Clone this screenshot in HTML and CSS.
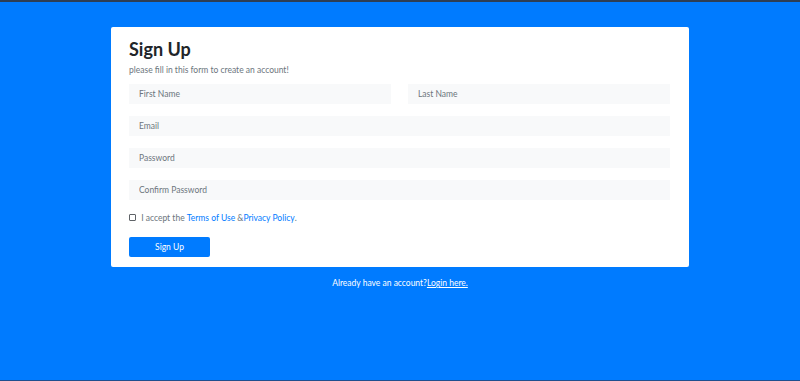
FILE: index.html
```html
<!DOCTYPE html>
<html>
<head>
<meta charset="utf-8">
<link rel="stylesheet" href="styles.css">
</head>
<body>
<div class="page">
  <div class="card">
    <h2 class="title">Sign Up</h2>
    <p class="subtitle">please fill in this form to create an account!</p>
    <div class="row">
      <input class="field" type="text" placeholder="First Name">
      <input class="field" type="text" placeholder="Last Name">
    </div>
    <input class="field" type="text" placeholder="Email">
    <input class="field" type="password" placeholder="Password">
    <input class="field" type="password" placeholder="Confirm Password">
    <label class="accept"><input class="check" type="checkbox"> I accept the <a class="link" href="#">Terms of Use</a> &amp;<a class="link" href="#">Privacy Policy</a>.</label>
    <button class="btn" type="button">Sign Up</button>
  </div>
  <p class="footer">Already have an account?<a class="login" href="#">Login here.</a></p>
</div>
</body>
</html>
```
FILE: styles.css
```css
html, body {
  margin: 0;
  padding: 0;
}
body {
  font-family: Lato, "Noto Sans", sans-serif;
}
.page {
  box-sizing: border-box;
  height: 381px;
  background: #007bff;
  border-top: 2px solid #2d3e55;
  border-bottom: 1px solid #1f4f8f;
  padding-top: 25px;
  display: flex;
  flex-direction: column;
  align-items: center;
}
.card {
  box-sizing: border-box;
  width: 578px;
  height: 240px;
  background: #fff;
  border-radius: 2px;
  padding: 11px 19px 0 18px;
  display: flex;
  flex-direction: column;
}
.title {
  margin: 0;
  font-size: 18px;
  font-weight: 700;
  color: #212529;
  line-height: 22px;
}
.subtitle {
  margin: 4px 0 0;
  font-size: 8.5px;
  color: #6c757d;
  line-height: 12px;
}
.row {
  display: flex;
  gap: 17px;
  margin-top: 8px;
}
.field {
  box-sizing: border-box;
  width: 100%;
  height: 20px;
  border: none;
  background: #f8f9fa;
  padding: 0 10px;
  font-family: inherit;
  font-size: 8.5px;
  color: #495057;
  outline: none;
  margin-top: 12px;
}
.row .field {
  margin-top: 0;
}
.field::placeholder {
  color: #6c757d;
}
.accept {
  display: flex;
  align-items: center;
  font-size: 8.5px;
  color: #6c757d;
  line-height: 12px;
  height: 12px;
  margin-top: 12px;
  white-space: pre;
}
.check {
  appearance: none;
  -webkit-appearance: none;
  box-sizing: border-box;
  width: 7px;
  height: 7px;
  border: 1px solid #5f6368;
  border-radius: 1px;
  background: #fff;
  margin: 0 3px 0 0;
  position: relative;
  top: -1px;
}
.link {
  color: #007bff;
  text-decoration: none;
}
.btn {
  width: 81px;
  height: 20px;
  border: none;
  border-radius: 2px;
  background: #007bff;
  color: #fff;
  font-family: inherit;
  font-size: 8.5px;
  padding: 0;
  margin-top: 13px;
}
.footer {
  margin: 10px 0 0;
  font-size: 8.5px;
  color: #fff;
  line-height: 12px;
}
.login {
  color: #fff;
  text-decoration: underline;
}
```
